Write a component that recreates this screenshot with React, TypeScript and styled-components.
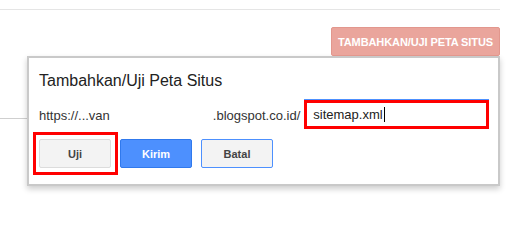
import React from 'react';
import styled, { createGlobalStyle } from 'styled-components';

const GlobalStyle = createGlobalStyle`
  body {
    margin: 0;
    background: #fff;
    font-family: Arial, "Liberation Sans", sans-serif;
  }
`;

const Page = styled.div`
  width: 500px;
  min-height: 228px;
  padding-top: 9px;
  box-sizing: border-box;
`;

const Rule = styled.div`
  height: 1px;
  background: #e5e5e5;
`;

const Toolbar = styled.div`
  display: flex;
  justify-content: flex-end;
  margin-top: 17px;
`;

const SitemapButton = styled.button`
  height: 29px;
  width: 169px;
  padding: 0;
  background: #eaa59c;
  border: 1px solid #e2978d;
  border-radius: 2px;
  color: #fff;
  font-family: Arial, "Liberation Sans", sans-serif;
  font-size: 11px;
  font-weight: bold;
  letter-spacing: -0.1px;
`;

/* the list behind the popup: only its divider's left end peeks out */
const Stage = styled.div`
  padding-left: 27px;
  background: linear-gradient(#cfcfcf, #cfcfcf) no-repeat 0 62px / 27px 1px;
`;

const Dialog = styled.div`
  width: 459px;
  height: 126px;
  background: #fff;
  border: 2px solid #c9c9c9;
  box-shadow: 0 3px 6px rgba(0, 0, 0, 0.2);
  padding: 0 0 0 10px;
`;

const Title = styled.h2`
  margin: 13px 0 0;
  font-size: 16px;
  font-weight: normal;
  line-height: 20px;
  color: #222;
`;

const UrlRow = styled.div`
  display: flex;
  align-items: center;
  margin-top: 9px;
`;

const UrlText = styled.span`
  font-size: 13px;
  color: #333;
  white-space: nowrap;
  margin-top: 1px;
`;

const Redacted = styled.span<{ $w: number }>`
  display: inline-block;
  width: ${(p) => p.$w}px;
`;

const UrlInput = styled.div`
  margin-left: 4px;
  width: 173px;
  height: 23px;
  border: 3px solid #f00;
  box-shadow: 0 -1px 0 #4d90fe;
  display: flex;
  align-items: center;
  padding-left: 6px;
  font-size: 13px;
  color: #222;
`;

const Caret = styled.span`
  display: inline-block;
  width: 1px;
  height: 15px;
  background: #000;
  margin-left: 1px;
`;

const Actions = styled.div`
  display: flex;
  gap: 9px;
  margin-top: 10px;
`;

const Mark = styled.div`
  border: 3px solid #f00;
  padding: 4px 4px 3px 3px;
  margin: -7px -7px -7px -6px;
  display: flex;
`;

const Button = styled.button<{ $variant?: 'primary' | 'focus' }>`
  width: 72px;
  height: 29px;
  padding: 0;
  border-radius: 2px;
  font-family: Arial, "Liberation Sans", sans-serif;
  font-size: 11px;
  font-weight: bold;
  background: ${(p) => (p.$variant === 'primary' ? '#4d90fe' : '#f3f3f3')};
  color: ${(p) => (p.$variant === 'primary' ? '#fff' : '#444')};
  border: 1px solid
    ${(p) =>
      p.$variant === 'primary' ? '#3079ed' : p.$variant === 'focus' ? '#4d90fe' : '#dcdcdc'};
`;

export default function App() {
  return (
    <Page>
      <GlobalStyle />
      <Rule />
      <Toolbar>
        <SitemapButton>TAMBAHKAN/UJI PETA SITUS</SitemapButton>
      </Toolbar>
      <Stage>
        <Dialog>
          <Title>Tambahkan/Uji Peta Situs</Title>
          <UrlRow>
            <UrlText>
              https://...van<Redacted $w={103} />.blogspot.co.id/
            </UrlText>
            <UrlInput>
              sitemap.xml<Caret />
            </UrlInput>
          </UrlRow>
          <Actions>
            <Mark>
              <Button>Uji</Button>
            </Mark>
            <Button $variant="primary">Kirim</Button>
            <Button $variant="focus">Batal</Button>
          </Actions>
        </Dialog>
      </Stage>
    </Page>
  );
}
